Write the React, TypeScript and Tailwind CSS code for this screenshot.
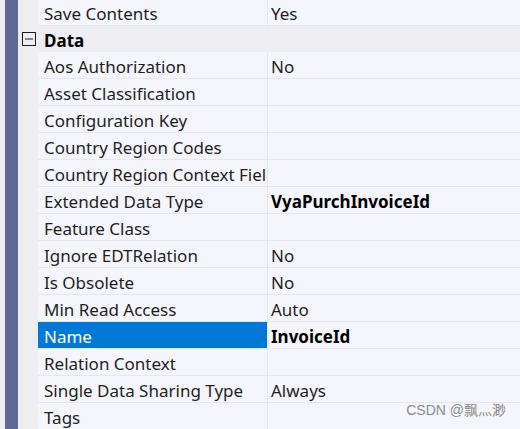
import React from 'react';

// property grid rows under the "Data" category
const dataRows: { label: string; value?: string; bold?: boolean; selected?: boolean }[] = [
  { label: 'Aos Authorization', value: 'No' },
  { label: 'Asset Classification' },
  { label: 'Configuration Key' },
  { label: 'Country Region Codes' },
  { label: 'Country Region Context Field' },
  { label: 'Extended Data Type', value: 'VyaPurchInvoiceId', bold: true },
  { label: 'Feature Class' },
  { label: 'Ignore EDTRelation', value: 'No' },
  { label: 'Is Obsolete', value: 'No' },
  { label: 'Min Read Access', value: 'Auto' },
  { label: 'Name', value: 'InvoiceId', bold: true, selected: true },
  { label: 'Relation Context' },
  { label: 'Single Data Sharing Type', value: 'Always' },
  { label: 'Tags' },
];

function PropRow({ label, value, bold, selected }: { label: string; value?: string; bold?: boolean; selected?: boolean }) {
  return (
    <div className="flex h-[27px]">
      <div className="w-[20px] shrink-0 bg-[#eeeef2]" />
      <div className="flex h-[27px] flex-1 border-b border-[#e6e7ee]">
        <div
          className={
            'h-[26px] w-[229px] shrink-0 overflow-hidden whitespace-nowrap pl-[6px] pt-[3px] leading-[23px] ' +
            (selected ? 'bg-[#0078d7] text-white' : 'bg-[#f5f6fb] text-[#1e1e1e]')
          }
        >
          {label}
        </div>
        <div className="w-px shrink-0 bg-[#e6e7ee]" />
        <div
          className={
            'h-[26px] flex-1 overflow-hidden whitespace-nowrap bg-[#f5f6fb] pl-[3px] pt-[3px] leading-[23px] text-[#1e1e1e] ' +
            (bold ? 'font-bold text-black' : '')
          }
        >
          {value}
        </div>
      </div>
    </div>
  );
}

export default function App() {
  return (
    <div className="relative flex h-[429px] w-[520px] overflow-hidden bg-[#f5f6fb] text-[17px] font-['Noto_Sans',sans-serif]">
      <div className="w-[5px] shrink-0 bg-[#eeeef2]" />
      <div className="w-[13px] shrink-0 bg-[#5d6a98]" />
      <div className="-mt-px flex flex-1 flex-col">
        <PropRow label="Save Contents" value="Yes" />

        {/* category header */}
        <div className="flex h-[27px] bg-[#eeeef2]">
          <div className="flex w-[20px] shrink-0 items-center justify-end pr-[2px]">
            <svg width="14" height="14" viewBox="0 0 14 14">
              <rect x="0.5" y="0.5" width="13" height="13" fill="none" stroke="#1e1e1e" />
              <line x1="3" y1="7" x2="11" y2="7" stroke="#1e1e1e" />
            </svg>
          </div>
          <div className="flex-1 pl-[6px] pt-[3px] font-bold leading-[23px] text-black">Data</div>
        </div>

        {dataRows.map((r) => (
          <PropRow key={r.label} {...r} />
        ))}
      </div>

      {/* watermark */}
      <div className="absolute right-[14px] bottom-[8px] text-[14px] text-[#8c8c8c] font-['Liberation_Sans','Noto_Sans_CJK_SC',sans-serif]">
        CSDN @飘灬渺
      </div>
    </div>
  );
}
